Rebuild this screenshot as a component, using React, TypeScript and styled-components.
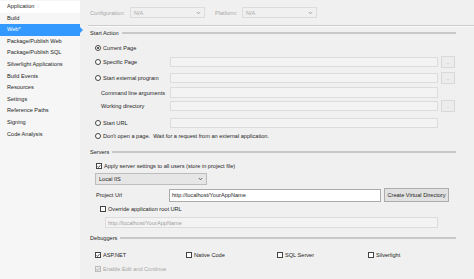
import React from "react";
import styled, { createGlobalStyle, css } from "styled-components";

const GlobalStyle = createGlobalStyle`
  html, body {
    margin: 0;
    padding: 0;
  }
  body {
    width: 474px;
    height: 279px;
    overflow: hidden;
    background: #f0f0f0;
    font-family: "Liberation Sans", Arial, sans-serif;
    font-size: 5.6px;
    color: #1e1e1e;
  }
`;

const Window = styled.div`
  display: flex;
  width: 474px;
  height: 279px;
`;

const Sidebar = styled.ul`
  width: 80px;
  flex-shrink: 0;
  margin: 0;
  padding: 1px 0 0;
  list-style: none;
  background: #f6f6f6;
`;

type NavItemProps = { $selected?: boolean; $hover?: boolean };

const NavItem = styled.li<NavItemProps>`
  position: relative;
  height: 11.6px;
  line-height: 11.6px;
  padding-left: 7px;
  white-space: nowrap;
  background: ${(p) => (p.$selected ? "#3399ff" : p.$hover ? "#ffffff" : "transparent")};
  color: ${(p) => (p.$selected ? "#ffffff" : "#1e1e1e")};
  ${(p) =>
    p.$selected &&
    css`
      &::after {
        content: "";
        position: absolute;
        right: -3px;
        top: 50%;
        margin-top: -3px;
        border-left: 3px solid #3399ff;
        border-top: 3px solid transparent;
        border-bottom: 3px solid transparent;
      }
    `}
`;

const Main = styled.div`
  flex: 1;
  display: flex;
  flex-direction: column;
  padding-left: 8px;
`;

const TopBar = styled.div`
  display: flex;
  align-items: center;
  height: 25px;
  padding-left: 2px;
  border-bottom: 1px solid #cdcdcd;
  box-shadow: 0 1px 0 #fafafa;
`;

const DimLabel = styled.span<{ $w: number; $ml?: number }>`
  width: ${(p) => p.$w}px;
  margin-left: ${(p) => p.$ml ?? 0}px;
  color: #a8a8a8;
`;

const Combo = styled.div<{ $w: number; $disabled?: boolean }>`
  display: flex;
  align-items: center;
  justify-content: space-between;
  box-sizing: border-box;
  width: ${(p) => p.$w}px;
  height: ${(p) => (p.$disabled ? 11 : 12)}px;
  padding: 0 3px 0 3px;
  border: 1px solid ${(p) => (p.$disabled ? "#dcdcdc" : "#bdbdbd")};
  background: ${(p) => (p.$disabled ? "#f0f0f0" : "#e6e6e6")};
  color: ${(p) => (p.$disabled ? "#a8a8a8" : "#1e1e1e")};
`;

const Chevron = ({ color }: { color: string }) => (
  <svg width="5" height="4" viewBox="0 0 5 4">
    <polyline points="0.8,1 2.5,2.8 4.2,1" fill="none" stroke={color} strokeWidth="0.9" />
  </svg>
);

const SectionHeader = styled.div<{ $mt: number }>`
  display: flex;
  align-items: center;
  gap: 3px;
  height: 10px;
  margin-top: ${(p) => p.$mt}px;
  padding-left: 2px;
`;

const HeaderRule = styled.div`
  flex: 1;
  height: 2px;
  margin-right: 18px;
  background: #c8c8c8;
`;

const Row = styled.div<{ $mt: number; $h: number; $indent?: number }>`
  display: flex;
  align-items: center;
  height: ${(p) => p.$h}px;
  margin-top: ${(p) => p.$mt}px;
  padding-left: ${(p) => p.$indent ?? 0}px;
  white-space: nowrap;
`;

const LabelCell = styled.div<{ $w: number }>`
  display: flex;
  align-items: center;
  width: ${(p) => p.$w}px;
  flex-shrink: 0;
`;

const RadioDot = styled.span<{ $on?: boolean }>`
  position: relative;
  box-sizing: border-box;
  width: 6px;
  height: 6px;
  margin-right: 2px;
  border: 1px solid #444;
  border-radius: 50%;
  background: #fff;
  flex-shrink: 0;
  ${(p) =>
    p.$on &&
    css`
      &::after {
        content: "";
        position: absolute;
        left: 1px;
        top: 1px;
        width: 2px;
        height: 2px;
        border-radius: 50%;
        background: #1e1e1e;
      }
    `}
`;

const Box = styled.span<{ $disabled?: boolean }>`
  display: flex;
  align-items: center;
  justify-content: center;
  box-sizing: border-box;
  width: 6px;
  height: 6px;
  margin-right: 2px;
  border: 1px solid ${(p) => (p.$disabled ? "#bcbcbc" : "#444")};
  background: ${(p) => (p.$disabled ? "#e8e8e8" : "#fff")};
  flex-shrink: 0;
`;

const Text = styled.span<{ $disabled?: boolean }>`
  color: ${(p) => (p.$disabled ? "#a6a6a6" : "#1e1e1e")};
`;

const Field = styled.div<{ $w: number; $h: number; $white?: boolean }>`
  display: flex;
  align-items: center;
  box-sizing: border-box;
  width: ${(p) => p.$w}px;
  height: ${(p) => p.$h}px;
  padding-left: 2px;
  border: 1px solid ${(p) => (p.$white ? "#ababab" : "#dcdcdc")};
  background: ${(p) => (p.$white ? "#ffffff" : "#f3f3f3")};
  color: ${(p) => (p.$white ? "#1e1e1e" : "#a0a0a0")};
`;

const Browse = styled.div`
  display: flex;
  align-items: center;
  justify-content: center;
  box-sizing: border-box;
  width: 14px;
  height: 12px;
  margin-left: 3px;
  border: 1px solid #d8d8d8;
  background: #ececec;
  color: #b4b4b4;
  font-size: 5px;
`;

const PushButton = styled.div`
  display: flex;
  align-items: center;
  justify-content: center;
  box-sizing: border-box;
  width: 65px;
  height: 14px;
  margin-left: 3px;
  border: 1px solid #adadad;
  background: #e1e1e1;
`;

const DebuggerGrid = styled.div`
  display: grid;
  grid-template-columns: repeat(4, 91px);
  align-items: center;
  height: 10px;
  margin-top: 7px;
  padding-left: 7px;
`;

const CheckItem = styled.div`
  display: flex;
  align-items: center;
  white-space: nowrap;
`;

const Check = ({ on, disabled }: { on?: boolean; disabled?: boolean }) => (
  <Box $disabled={disabled}>
    {on && (
      <svg width="5" height="5" viewBox="0 0 5 5">
        <polyline
          points="0.7,2.4 1.9,3.7 4.3,0.9"
          fill="none"
          stroke={disabled ? "#a0a0a0" : "#1e1e1e"}
          strokeWidth="1"
        />
      </svg>
    )}
  </Box>
);

const navItems = [
  "Application",
  "Build",
  "Web*",
  "Package/Publish Web",
  "Package/Publish SQL",
  "Silverlight Applications",
  "Build Events",
  "Resources",
  "Settings",
  "Reference Paths",
  "Signing",
  "Code Analysis",
];

const debuggers = [
  { label: "ASP.NET", on: true },
  { label: "Native Code", on: false },
  { label: "SQL Server", on: false },
  { label: "Silverlight", on: false },
];

export default function App() {
  return (
    <>
      <GlobalStyle />
      <Window>
        <Sidebar>
          {navItems.map((item) => (
            <NavItem key={item} $selected={item === "Web*"} $hover={item === "Application"}>
              {item}
            </NavItem>
          ))}
        </Sidebar>

        <Main>
          <TopBar>
            <DimLabel $w={40}>Configuration:</DimLabel>
            <Combo $w={75} $disabled>
              <span>N/A</span>
              <Chevron color="#9a9a9a" />
            </Combo>
            <DimLabel $w={27} $ml={10}>Platform:</DimLabel>
            <Combo $w={75} $disabled>
              <span>N/A</span>
              <Chevron color="#9a9a9a" />
            </Combo>
          </TopBar>

          <SectionHeader $mt={2}>
            Start Action
            <HeaderRule />
          </SectionHeader>

          <Row $mt={5} $h={10} $indent={7}>
            <RadioDot $on />
            <Text>Current Page</Text>
          </Row>

          <Row $mt={3} $h={11} $indent={7}>
            <LabelCell $w={75}>
              <RadioDot />
              <Text>Specific Page</Text>
            </LabelCell>
            <Field $w={268} $h={10} />
            <Browse>...</Browse>
          </Row>

          <Row $mt={5} $h={11} $indent={7}>
            <LabelCell $w={75}>
              <RadioDot />
              <Text>Start external program</Text>
            </LabelCell>
            <Field $w={268} $h={10} />
            <Browse>...</Browse>
          </Row>

          <Row $mt={4} $h={11} $indent={13}>
            <LabelCell $w={69}>Command line arguments</LabelCell>
            <Field $w={268} $h={11} />
          </Row>

          <Row $mt={2} $h={11} $indent={13}>
            <LabelCell $w={69}>Working directory</LabelCell>
            <Field $w={268} $h={10} />
            <Browse>...</Browse>
          </Row>

          <Row $mt={6} $h={11} $indent={7}>
            <LabelCell $w={75}>
              <RadioDot />
              <Text>Start URL</Text>
            </LabelCell>
            <Field $w={268} $h={10} />
          </Row>

          <Row $mt={3} $h={10} $indent={7}>
            <RadioDot />
            <Text>Don't open a page.&nbsp; Wait for a request from an external application.</Text>
          </Row>

          <SectionHeader $mt={6}>
            Servers
            <HeaderRule />
          </SectionHeader>

          <Row $mt={4} $h={10} $indent={8}>
            <Check on />
            <Text>Apply server settings to all users (store in project file)</Text>
          </Row>

          <Row $mt={2} $h={12} $indent={7}>
            <Combo $w={112}>
              <span>Local IIS</span>
              <Chevron color="#555" />
            </Combo>
          </Row>

          <Row $mt={3} $h={14} $indent={8}>
            <LabelCell $w={73}>Project Url</LabelCell>
            <Field $w={212} $h={13} $white>
              http://localhost/YourAppName
            </Field>
            <PushButton>Create Virtual Directory</PushButton>
          </Row>

          <Row $mt={2} $h={10} $indent={12}>
            <Check />
            <Text>Override application root URL</Text>
          </Row>

          <Row $mt={3} $h={11} $indent={17}>
            <Field $w={333} $h={11}>
              http://localhost/YourAppName
            </Field>
          </Row>

          <SectionHeader $mt={5}>
            Debuggers
            <HeaderRule />
          </SectionHeader>

          <DebuggerGrid>
            {debuggers.map((d) => (
              <CheckItem key={d.label}>
                <Check on={d.on} />
                <Text>{d.label}</Text>
              </CheckItem>
            ))}
          </DebuggerGrid>

          <Row $mt={4} $h={10} $indent={7}>
            <Check on disabled />
            <Text $disabled>Enable Edit and Continue</Text>
          </Row>
        </Main>
      </Window>
    </>
  );
}
